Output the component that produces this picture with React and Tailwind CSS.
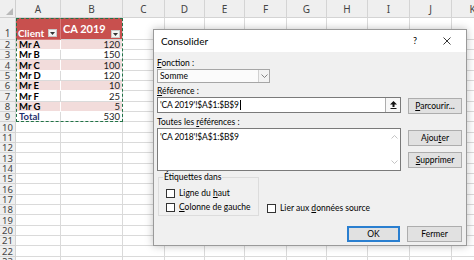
import React from "react";

const cols = [
  { l: "A", w: "w-[45px]" },
  { l: "B", w: "w-[62px]" },
  { l: "C", w: "w-[42px]" },
  { l: "D", w: "w-[40px]" },
  { l: "E", w: "w-[40px]" },
  { l: "F", w: "w-[42px]" },
  { l: "G", w: "w-[40px]" },
  { l: "H", w: "w-[41px]" },
  { l: "I", w: "w-[42px]" },
  { l: "J", w: "w-[42px]" },
  { l: "K", w: "w-[42px]" },
];

const data = {
  2: ["Mr A", "120"],
  3: ["Mr B", "150"],
  4: ["Mr C", "100"],
  5: ["Mr D", "120"],
  6: ["Mr E", "10"],
  7: ["Mr F", "25"],
  8: ["Mr G", "5"],
  9: ["Total", "530"],
};

const rowNums = Array.from({ length: 22 }, (_, i) => i + 2);

function FilterBtn() {
  return (
    <div className="w-[9px] h-[8px] bg-[#f4f4f4] border border-[#c9c9c9] flex items-center justify-center">
      <svg width="5" height="3" viewBox="0 0 5 3">
        <path d="M0 0H5L2.5 3Z" fill="#333" />
      </svg>
    </div>
  );
}

function Sheet() {
  return (
    <div className="relative" style={{ fontFamily: "'Noto Sans', sans-serif" }}>
      <div className="flex h-[18px]">
        <div className="w-[16px] shrink-0 bg-[#efefef] border-r border-b border-[#cfcfcf] relative">
          <svg className="absolute right-[2px] bottom-[2px]" width="7" height="7" viewBox="0 0 7 7">
            <path d="M7 0V7H0Z" fill="#b8b8b8" />
          </svg>
        </div>
        {cols.map((c) => (
          <div
            key={c.l}
            className={`${c.w} shrink-0 bg-[#efefef] border-r border-b border-[#d4d4d4] text-[10px] text-[#444] flex items-center justify-center pt-[2px] whitespace-nowrap`}
          >
            {c.l}
          </div>
        ))}
      </div>
      <div className="flex h-[22px]">
        <div className="w-[16px] shrink-0 bg-[#efefef] border-r border-b border-[#d4d4d4] text-[10px] leading-[10px] text-[#444] flex items-end justify-center pb-[1px]">
          1
        </div>
        <div className="w-[45px] shrink-0 bg-[#c8504e] border-r border-b border-[#d77a78] flex items-end justify-between pl-[2px] pr-[3px] pb-[1px]">
          <span className="text-white font-bold text-[10px] leading-[10px]" style={{ fontFamily: "Lato, sans-serif" }}>
            Client
          </span>
          <div className="mb-[1px]">
            <FilterBtn />
          </div>
        </div>
        <div className="w-[62px] shrink-0 bg-[#c8504e] border-r border-b border-[#d4d4d4] flex justify-between pl-[2px] pr-[2px]">
          <span className="text-white font-bold text-[11px] leading-[11px] mt-[5px]" style={{ fontFamily: "Lato, sans-serif" }}>
            CA 2019
          </span>
          <div className="mt-[12px]">
            <FilterBtn />
          </div>
        </div>
        {cols.slice(2).map((c) => (
          <div key={c.l} className={`${c.w} shrink-0 border-r border-b border-[#dadada]`} />
        ))}
      </div>
      {rowNums.map((r, i) => {
        const h = i % 3 === 2 ? "h-[11px]" : "h-[10px]";
        const d = data[r];
        const pink = d && r % 2 === 0;
        return (
          <div key={r} className={`flex ${h}`}>
            <div className="w-[16px] shrink-0 bg-[#efefef] border-r border-b border-[#d4d4d4] text-[9.5px] leading-[9px] text-[#444] flex items-center justify-center">
              {r}
            </div>
            {d ? (
              <>
                <div
                  className={`w-[45px] shrink-0 border-r border-b ${pink ? "bg-[#f2dcdb] border-white" : "bg-white border-[#dadada]"} flex items-center pl-[3px] text-[9.5px] leading-[9px] font-bold ${r === 9 ? "text-[#1f2f6e]" : "text-black"}`}
                  style={{ fontFamily: "Lato, sans-serif" }}
                >
                  {d[0]}
                </div>
                <div
                  className={`w-[62px] shrink-0 border-r border-b ${pink ? "bg-[#f2dcdb] border-white" : "bg-white border-[#dadada]"} flex items-center justify-end pr-[2px] text-[9.5px] leading-[9px] text-[#222]`}
                  style={{ fontFamily: "Lato, sans-serif" }}
                >
                  {d[1]}
                </div>
                {cols.slice(2).map((c) => (
                  <div key={c.l} className={`${c.w} shrink-0 border-r border-b border-[#dadada]`} />
                ))}
              </>
            ) : (
              cols.map((c) => <div key={c.l} className={`${c.w} shrink-0 border-r border-b border-[#dadada]`} />)
            )}
          </div>
        );
      })}
      <div className="absolute left-[16px] top-[18px] w-[107px] h-[104px] border border-dashed border-[#217346]" />
    </div>
  );
}

function Btn({ className = "", children }) {
  return (
    <div
      className={`h-[16px] bg-[#e1e1e1] border border-[#adadad] flex items-center justify-center text-[8.5px] leading-[12px] text-black whitespace-nowrap ${className}`}
    >
      {children}
    </div>
  );
}

function Check({ children }) {
  return (
    <div className="flex items-center h-[12px] whitespace-nowrap">
      <div className="w-[9px] h-[9px] shrink-0 bg-white border border-[#333]" />
      <span className="ml-[4px] text-[8.5px] leading-[12px]">{children}</span>
    </div>
  );
}

function Dialog() {
  return (
    <div
      className="absolute left-[153px] top-[29px] w-[314px] h-[217px] border border-[#9a9a9a] bg-[#f0f0f0] shadow-[0_0_8px_rgba(0,0,0,0.25)] flex flex-col text-black"
      style={{ fontFamily: "Lato, sans-serif" }}
    >
      <div className="h-[22px] bg-white flex items-center pl-[7px]">
        <span className="text-[10px] leading-[12px]">Consolider</span>
        <span className="ml-auto text-[9px] leading-[12px] mr-[26px]">?</span>
        <svg className="mr-[15px]" width="8" height="8" viewBox="0 0 8 8">
          <path d="M0.5 0.5L7.5 7.5M7.5 0.5L0.5 7.5" stroke="#222" strokeWidth="0.9" />
        </svg>
      </div>
      <div className="flex-1 pl-[3px] pr-[4px] flex flex-col text-[8.5px] whitespace-nowrap">
        <div className="mt-[5px] h-[12px] leading-[12px]">
          <u>F</u>onction :
        </div>
        <div className="h-[14px] w-[113px] border border-[#a6a6a6] bg-[#fbfbfb] flex">
          <div className="flex-1 flex items-center pl-[2px] leading-[12px]">Somme</div>
          <div className="w-[11px] border-l border-[#d0d0d0] bg-[#f3f3f3] flex items-center justify-center">
            <svg width="7" height="4" viewBox="0 0 7 4">
              <path d="M0.5 0.5L3.5 3.5L6.5 0.5" stroke="#666" strokeWidth="0.8" fill="none" />
            </svg>
          </div>
        </div>
        <div className="h-[14px] pt-[2px] leading-[12px]">
          <u>R</u>éférence :
        </div>
        <div className="flex gap-[7px]">
          <div className="h-[16px] w-[244px] border border-[#7a7a7a] bg-white flex items-center">
            <span className="pl-[2px] leading-[12px] tracking-[-0.15px]">'CA 2019'!$A$1:$B$9</span>
            <span className="w-px h-[10px] bg-black ml-[1px]" />
            <div className="ml-auto h-[14px] w-[15px] border-l border-[#adadad] bg-[#f7f7f7] flex items-center justify-center">
              <svg width="7" height="8" viewBox="0 0 7 8">
                <path d="M3.5 0L7 3.5H4.5V6H2.5V3.5H0Z" fill="#111" />
                <rect x="0.5" y="7" width="6" height="1" fill="#111" />
              </svg>
            </div>
          </div>
          <Btn className="mt-[1px] w-[54px]">
            <span>
              <u>P</u>arcourir...
            </span>
          </Btn>
        </div>
        <div className="h-[14px] pt-[2px] leading-[12px]">
          Toutes les <u>r</u>éférences :
        </div>
        <div className="flex gap-[7px]">
          <div className="h-[43px] w-[244px] border border-[#7a7a7a] bg-white flex">
            <div className="flex-1 pl-[2px] pt-[2px] leading-[12px] tracking-[-0.15px]">'CA 2018'!$A$1:$B$9</div>
            <div className="w-[12px] flex flex-col items-center justify-between py-[6px]">
              <svg width="7" height="4" viewBox="0 0 7 4">
                <path d="M0.5 3.5L3.5 0.5L6.5 3.5" stroke="#b5b5b5" strokeWidth="0.8" fill="none" />
              </svg>
              <svg width="7" height="4" viewBox="0 0 7 4">
                <path d="M0.5 0.5L3.5 3.5L6.5 0.5" stroke="#b5b5b5" strokeWidth="0.8" fill="none" />
              </svg>
            </div>
          </div>
          <div className="flex flex-col gap-[6px] pt-[2px]">
            <Btn className="w-[54px]">
              <span>
                Ajou<u>t</u>er
              </span>
            </Btn>
            <Btn className="w-[54px]">
              <span>
                <u>S</u>upprimer
              </span>
            </Btn>
          </div>
        </div>
        <div className="flex items-end">
          <fieldset className="ml-[1px] w-[101px] h-[45px] border border-[#dcdcdc] pl-[7px] pr-0 pb-0">
            <legend className="text-[8.5px] leading-[12px] px-[1px] ml-[-3px]">Étiquettes dans</legend>
            <div className="mt-[4px] flex flex-col gap-[2px]">
              <Check>
                Ligne du <u>h</u>aut
              </Check>
              <Check>
                <u>C</u>olonne de gauche
              </Check>
            </div>
          </fieldset>
          <div className="ml-[8px] mb-[2px]">
            <Check>
              Lier aux <u>d</u>onnées source
            </Check>
          </div>
        </div>
        <div className="mt-[10px] flex justify-end gap-[7px]">
          <div className="h-[16px] w-[53px] bg-[#e1e1e1] border-2 border-[#2a7fd0] flex items-center justify-center text-[8.5px] leading-[12px]">
            OK
          </div>
          <Btn className="w-[55px]">Fermer</Btn>
        </div>
      </div>
    </div>
  );
}

export default function App() {
  return (
    <div className="relative w-[474px] h-[260px] overflow-hidden bg-white">
      <Sheet />
      <Dialog />
    </div>
  );
}
